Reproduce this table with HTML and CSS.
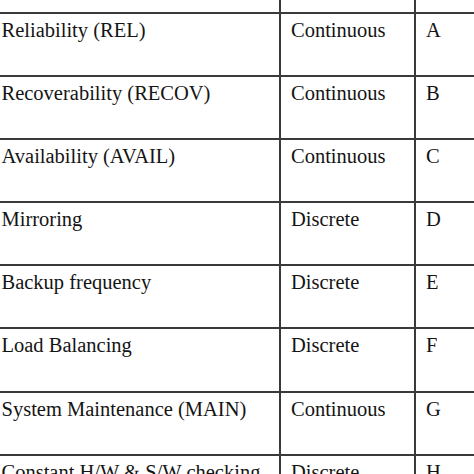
FILE: index.html
```html
<!DOCTYPE html>
<html>
<head>
<meta charset="utf-8">
<link rel="stylesheet" href="styles.css">
</head>
<body>
<div class="table">
  <div class="row head"><div class="cell c1"></div><div class="cell c2"></div><div class="cell c3"></div></div>
  <div class="row"><div class="cell c1">Reliability (REL)</div><div class="cell c2">Continuous</div><div class="cell c3">A</div></div>
  <div class="row"><div class="cell c1">Recoverability (RECOV)</div><div class="cell c2">Continuous</div><div class="cell c3">B</div></div>
  <div class="row"><div class="cell c1">Availability (AVAIL)</div><div class="cell c2">Continuous</div><div class="cell c3">C</div></div>
  <div class="row"><div class="cell c1">Mirroring</div><div class="cell c2">Discrete</div><div class="cell c3">D</div></div>
  <div class="row"><div class="cell c1">Backup frequency</div><div class="cell c2">Discrete</div><div class="cell c3">E</div></div>
  <div class="row"><div class="cell c1">Load Balancing</div><div class="cell c2">Discrete</div><div class="cell c3">F</div></div>
  <div class="row"><div class="cell c1">System Maintenance (MAIN)</div><div class="cell c2">Continuous</div><div class="cell c3">G</div></div>
  <div class="row"><div class="cell c1">Constant H/W &amp; S/W checking</div><div class="cell c2">Discrete</div><div class="cell c3">H</div></div>
</div>
</body>
</html>
```
FILE: styles.css
```css
html, body {
  margin: 0;
  padding: 0;
  background: #ffffff;
  overflow: hidden;
}
.table {
  width: 474px;
  font-family: "Liberation Serif", "Times New Roman", serif;
  font-size: 20.5px;
  line-height: 24px;
  color: #141414;
}
.row {
  display: grid;
  grid-template-columns: 279px 135px 1fr;
  height: 63.1px;
  box-sizing: border-box;
  border-bottom: 2px solid #3a3a3a;
}
.row.head {
  height: 14px;
}
.cell {
  padding-top: 4px;
  white-space: nowrap;
  overflow: hidden;
}
.c1 {
  padding-left: 1.5px;
}
.c2, .c3 {
  border-left: 2px solid #3a3a3a;
  padding-left: 10px;
}
```
